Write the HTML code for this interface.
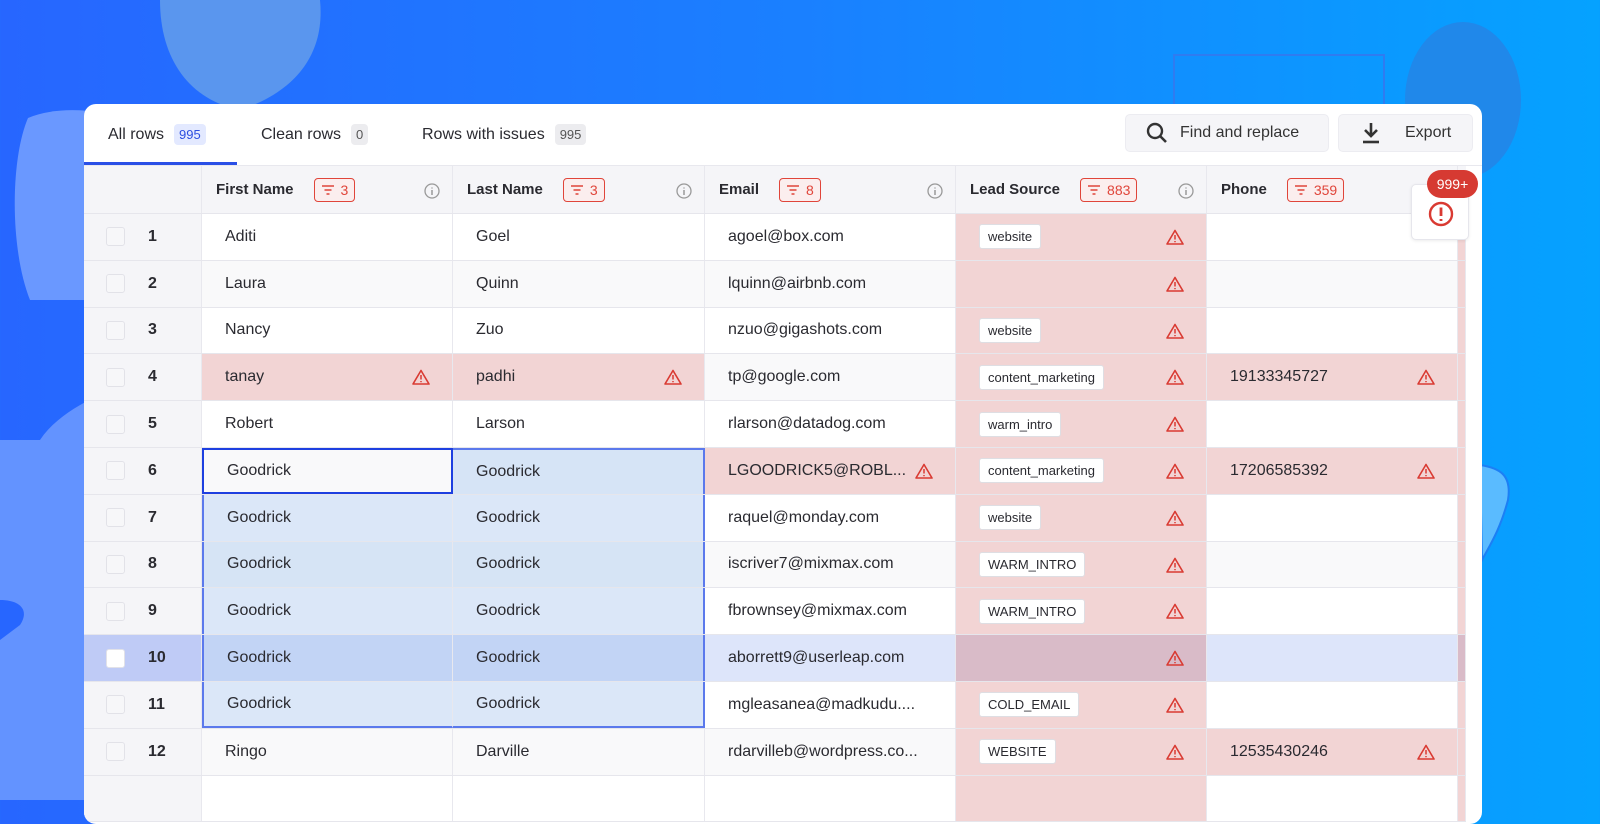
<!DOCTYPE html>
<html><head><meta charset="utf-8"><style>
*{box-sizing:border-box;margin:0;padding:0}
body{width:1600px;height:800px;overflow:hidden;position:relative;font-family:"Liberation Sans",sans-serif;color:#2a2a30;background:linear-gradient(90deg,#2766ff 0%,#1a80ff 50%,#05a2ff 100%)}
.bg{position:absolute}
.card{position:absolute;left:84px;top:104px;width:1398px;height:720px;background:#fff;border-radius:12px;overflow:hidden}
.tabs{position:absolute;left:0;top:0;width:100%;height:62px;border-bottom:1px solid #e8e8ee}
.tab{position:absolute;top:20px;font-size:16px;color:#2a2a30;display:flex;align-items:center}
.cnt{margin-left:10px;font-size:13px;padding:3px 5px;border-radius:4px;background:#ececef;color:#555}
.btn{position:absolute;top:10px;height:38px;background:#f5f5f8;border:1px solid #ececf1;border-radius:5px;display:flex;align-items:center;font-size:16px;color:#333}
.row{position:absolute;left:0;width:1382px;height:46.8px;border-bottom:1px solid #e6e6ec}
.c{position:absolute;top:0;height:100%;border-right:1px solid #e8e8ee;display:flex;align-items:center;font-size:16px}
.c0{left:0;width:118px;background:#f5f5f8}
.c1{left:118px;width:251px;padding-left:23px}
.c2{left:369px;width:252px;padding-left:23px}
.c3{left:621px;width:251px;padding-left:23px}
.c4{left:872px;width:251px;padding-left:23px}
.c5{left:1123px;width:251px;padding-left:23px}
.c6{left:1374px;width:8px;background:#f2d4d4}
.cb{position:absolute;left:22px;width:19px;height:19px;border:1px solid #e2e2e8;border-radius:3px;background:#f7f7f9}
.num{position:absolute;left:64px;font-weight:bold;font-size:16px}
.pink{background:#f2d4d4}
.tag{background:#fff;border:1px solid #dedee3;border-radius:3px;font-size:13px;padding:4px 8px}
.w{position:absolute;right:22px;top:15px}
.hd{position:absolute;left:0;top:62px;width:1382px;height:48px;background:#f5f5f8;border-bottom:1px solid #e6e6ec}
.hd .c{font-weight:bold;font-size:15px;padding-left:14px}
.f{margin-left:20px;border:1px solid #e0453a;border-radius:4px;color:#e0453a;font-weight:normal;font-size:14px;height:24px;padding:0 6px;display:flex;align-items:center;background:#fbeeee}
.f svg{margin-right:6px}
.info{position:absolute;right:12px;top:17px}
</style></head><body>
<svg class="bg" style="left:0;top:0" width="1600" height="800">
<path d="M160 0 L320 0 C325 50 300 90 240 110 C190 100 160 60 160 0Z" fill="#5a96ee"/>
<path d="M28 118 C60 105 100 110 130 120 L130 300 L30 300 C10 250 10 160 28 118Z" fill="#6a98ff"/>
<path d="M0 440 L40 440 C60 410 100 395 130 380 L130 800 L0 800 Z" fill="#6a98ff" opacity=".9"/>
<path d="M0 600 C20 600 30 610 20 625 L0 640Z" fill="#2766ff"/>
<rect x="1174" y="55" width="210" height="60" fill="none" stroke="#2f7cf0" stroke-width="2"/>
<ellipse cx="1463" cy="100" rx="58" ry="78" fill="#2088ea"/>
<path d="M1480 465 C1500 468 1512 475 1508 500 C1500 530 1490 545 1482 560Z" fill="#5abbff" stroke="#1c7ff5" stroke-width="2"/>
</svg>
<div class="card">
 <div class="tabs">
  <div class="tab" style="left:24px">All rows<span class="cnt" style="background:#e3e9ff;color:#2d4fe0">995</span></div>
  <div class="tab" style="left:177px">Clean rows<span class="cnt">0</span></div>
  <div class="tab" style="left:338px">Rows with issues<span class="cnt">995</span></div>
  <div style="position:absolute;left:0;top:58px;width:153px;height:3px;background:#2a4fe6"></div>
  <div class="btn" style="left:1041px;width:204px"><svg style="margin:0 12px 0 20px" width="22" height="22" viewBox="0 0 22 22"><circle cx="9" cy="9" r="7" fill="none" stroke="#333" stroke-width="2.4"/><path d="M14 14 L20 20" stroke="#333" stroke-width="2.6"/></svg>Find and replace</div>
  <div class="btn" style="left:1254px;width:135px"><svg style="margin:0 24px 0 22px" width="20" height="22" viewBox="0 0 20 22"><path d="M10 1 V13 M4 8 L10 14 L16 8" fill="none" stroke="#333" stroke-width="2.6"/><path d="M2 20 H18" stroke="#333" stroke-width="2.6"/></svg>Export</div>
 </div>
 <div class="hd" id="hd"></div>
 <div id="rows"></div>
 <div style="position:absolute;left:1327px;top:80px;width:58px;height:56px;background:#fff;border:1px solid #e6e6ec;border-radius:5px;box-shadow:0 1px 3px rgba(0,0,0,.08)"><svg style="position:absolute;left:16px;top:16px" width="26" height="26"><circle cx="13" cy="13" r="11" fill="none" stroke="#d93a32" stroke-width="2.4"/><path d="M13 6.5V15M13 18V20" stroke="#d93a32" stroke-width="2.8"/></svg></div>
 <div style="position:absolute;left:1343px;top:66px;width:51px;height:28px;background:#d63a32;border-radius:14px;color:#fff;font-size:14px;display:flex;align-items:center;justify-content:center">999+</div>
</div>
<script>
var FI='<svg width="14" height="12" viewBox="0 0 14 12"><path d="M1 2H13M3.5 6H10.5M5.5 10H8.5" stroke="#e0453a" stroke-width="1.6"/></svg>';
var IN='<svg class="info" width="16" height="16"><circle cx="8" cy="8" r="7" fill="none" stroke="#999" stroke-width="1.3"/><path d="M8 7V12M8 4.5V5.5" stroke="#999" stroke-width="1.5"/></svg>';
var hs=[["First Name","3"],["Last Name","3"],["Email","8"],["Lead Source","883"],["Phone","359"]];
var hh='<div class="c c0"></div>';
hs.forEach(function(x,i){hh+='<div class="c c'+(i+1)+'">'+x[0]+'<span class="f">'+FI+x[1]+'</span>'+(i<4?IN:'')+'</div>';});
document.getElementById('hd').innerHTML=hh;
var W='<svg class="w" width="18" height="16" viewBox="0 0 18 16"><path d="M9 1.5 L17 15 H1Z" fill="none" stroke="#d93a32" stroke-width="1.6" stroke-linejoin="round"/><path d="M9 6V10.5M9 12V13.3" stroke="#d93a32" stroke-width="1.5"/></svg>';
var d=[
["Aditi","Goel","agoel@box.com","website",""],
["Laura","Quinn","lquinn@airbnb.com","",""],
["Nancy","Zuo","nzuo@gigashots.com","website",""],
["tanay","padhi","tp@google.com","content_marketing","19133345727"],
["Robert","Larson","rlarson@datadog.com","warm_intro",""],
["Goodrick","Goodrick","LGOODRICK5@ROBL...","content_marketing","17206585392"],
["Goodrick","Goodrick","raquel@monday.com","website",""],
["Goodrick","Goodrick","iscriver7@mixmax.com","WARM_INTRO",""],
["Goodrick","Goodrick","fbrownsey@mixmax.com","WARM_INTRO",""],
["Goodrick","Goodrick","aborrett9@userleap.com","",""],
["Goodrick","Goodrick","mgleasanea@madkudu....","COLD_EMAIL",""],
["Ringo","Darville","rdarvilleb@wordpress.co...","WEBSITE","12535430246"],
["","","","",""]];
var h='';
d.forEach(function(r,i){
 var n=i+1,top=110+i*46.8,bg=(i%2)?'#f9f9fa':'#fff';
 var s1=bg,s2=bg,s3=bg,s5=bg,c0='#f5f5f8',s4='#f2d4d4',bd1='',bd2='';
 if(n==4){s1=s2='#f2d4d4';s5='#f2d4d4'}
 if(n==6){s1='#f9f9fa';s2='#d6e4f6';s3='#f2d4d4';s5='#f2d4d4';bd1='border:2px solid #1d3fe0;';}
 if(n>=7&&n<=11){s1=s2=(n%2?'#dbe7f8':'#d6e4f5')}
 if(n==10){s1=s2='#c2d4f5';s3='#dde5fa';s4='#d9bbc8';s5='#dde5fa';c0='#bfcbf6'}
 if(n==12){s5='#f2d4d4'}
 if(n>=7&&n<=11){bd1='border-left:2px solid #5b79ec;';bd2='border-right:2px solid #5b79ec;';if(n==11){bd1+='border-bottom:2px solid #5b79ec;';bd2+='border-bottom:2px solid #5b79ec;'}}
 if(n==6)bd2='border-top:2px solid #5b79ec;border-right:2px solid #5b79ec;';
 h+='<div class="row" style="top:'+top+'px;background:'+bg+'">';
 if(n<13){
 h+='<div class="c c0" style="background:'+c0+'"><span class="cb" style="'+(n==10?'background:#fff':'')+'"></span><span class="num">'+n+'</span></div>';
 h+='<div class="c c1" style="background:'+s1+';'+bd1+'">'+r[0]+(n==4?W:'')+'</div>';
 h+='<div class="c c2" style="background:'+s2+';'+bd2+'">'+r[1]+(n==4?W:'')+'</div>';
 h+='<div class="c c3" style="background:'+s3+'">'+r[2]+(n==6?W:'')+'</div>';
 h+='<div class="c c4" style="background:'+s4+'">'+(r[3]?'<span class="tag">'+r[3]+'</span>':'')+W+'</div>';
 h+='<div class="c c5" style="background:'+s5+'">'+r[4]+(r[4]?W:'')+'</div>';
 h+='<div class="c c6" style="'+(n==10?'background:#d9bbc8':'')+'"></div>';
 } else {
 h+='<div class="c c0"></div><div class="c c1"></div><div class="c c2"></div><div class="c c3"></div><div class="c c4 pink"></div><div class="c c5"></div><div class="c c6"></div>';
 }
 h+='</div>';
});
document.getElementById('rows').innerHTML=h;
</script>
</body></html>
